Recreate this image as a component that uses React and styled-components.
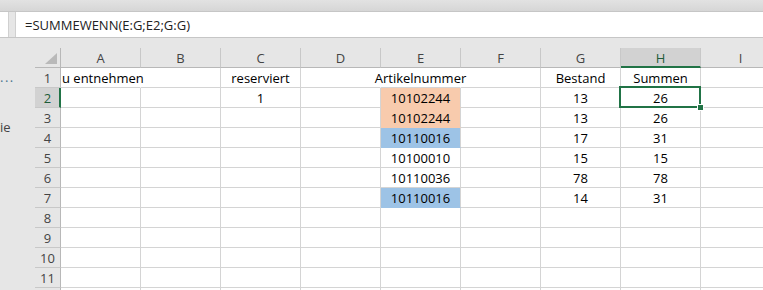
import React from 'react';
import styled, { createGlobalStyle } from 'styled-components';

const GlobalStyle = createGlobalStyle`
  html, body {
    margin: 0;
    padding: 0;
    background: #e6e6e6;
    overflow: hidden;
  }
`;

const CELL_FONT = `"Open Sans", "Noto Sans", sans-serif`;
const UI_FONT = `"Open Sans", "Noto Sans", sans-serif`;
const GREEN = '#217346';
const GRID = '#d4d4d4';

const Page = styled.div`
  width: 763px;
  height: 290px;
  overflow: hidden;
  background: #e6e6e6;
  display: flex;
  flex-direction: column;
`;

const TopStrip = styled.div`
  height: 11px;
  flex: none;
  background: linear-gradient(#e2e2e2, #d6d6d6);
  border-bottom: 1px solid #c6c6c6;
`;

const FormulaRow = styled.div`
  height: 25px;
  flex: none;
  display: flex;
  gap: 6px;
  border-bottom: 1px solid #c6c6c6;
  background: #e6e6e6;
`;

const NameBoxEnd = styled.div`
  width: 8px;
  background: #fff;
  border-right: 1px solid #d0d0d0;
`;

const FormulaBox = styled.div`
  flex: 1;
  background: #fff;
  border-left: 1px solid #d0d0d0;
  display: flex;
  align-items: center;
  padding-left: 9px;
  font-family: ${UI_FONT};
  font-size: 13px;
  color: #222;
`;

const Spacer = styled.div`
  height: 10px;
  flex: none;
`;

const Body = styled.div`
  flex: 1;
  display: flex;
  min-height: 0;
`;

const SidePanel = styled.div`
  width: 35px;
  flex: none;
  display: flex;
  flex-direction: column;
  font-family: ${UI_FONT};
  font-size: 13px;
  color: #444;
  padding-top: 19px;
  overflow: hidden;
  white-space: nowrap;
`;

const SideLine = styled.div`
  height: ${(p) => p.h}px;
  line-height: 20px;
  color: ${(p) => p.color || '#444'};
  letter-spacing: ${(p) => p.spacing || 0}px;
`;

const Sheet = styled.div`
  display: grid;
  grid-template-columns: 26px repeat(9, 80px);
  grid-template-rows: 20px;
  grid-auto-rows: 20px;
  font-family: ${CELL_FONT};
  font-size: 13px;
  color: #000;
  background: #fff;
  align-self: flex-start;
`;

const Corner = styled.div`
  background: #e6e6e6;
  border-right: 1px solid #b8b8b8;
  border-bottom: 1px solid #b8b8b8;
  box-sizing: border-box;
  display: flex;
  align-items: flex-end;
  justify-content: flex-end;
  padding: 0 3px 3px 0;
`;

const ColHead = styled.div`
  box-sizing: border-box;
  background: ${(p) => (p.active ? '#d2d2d2' : '#e6e6e6')};
  border-right: 1px solid #c8c8c8;
  border-bottom: ${(p) => (p.active ? `2px solid ${GREEN}` : '1px solid #b8b8b8')};
  color: ${(p) => (p.active ? '#1d5c38' : '#444')};
  display: flex;
  align-items: center;
  justify-content: center;
  padding-top: ${(p) => (p.active ? 1 : 0)}px;
`;

const RowHead = styled.div`
  box-sizing: border-box;
  background: ${(p) => (p.active ? '#d2d2d2' : '#e6e6e6')};
  border-right: ${(p) => (p.active ? `2px solid ${GREEN}` : '1px solid #b8b8b8')};
  border-bottom: 1px solid #c8c8c8;
  color: ${(p) => (p.active ? '#1d5c38' : '#444')};
  display: flex;
  align-items: center;
  justify-content: center;
  padding-left: ${(p) => (p.active ? 1 : 0)}px;
`;

// cells whose text spills into neighbours are lifted above them
const Cell = styled.div`
  position: ${(p) => (p.selected || p.spill ? 'relative' : 'static')};
  z-index: ${(p) => (p.spill ? 1 : 'auto')};
  box-sizing: border-box;
  background: ${(p) => (p.spill ? 'transparent' : p.fill || '#fff')};
  border-right: 1px solid ${(p) => (p.open ? 'transparent' : GRID)};
  border-bottom: 1px solid ${(p) => p.fill || GRID};
  display: flex;
  align-items: center;
  justify-content: ${(p) => (p.left ? 'flex-start' : 'center')};
  padding-left: ${(p) => (p.left ? 1 : 0)}px;
  white-space: nowrap;
  overflow: visible;
  padding-top: 1px;
`;

const Selection = styled.div`
  position: absolute;
  left: -2px;
  top: -2px;
  right: -1px;
  bottom: -1px;
  border: 2px solid ${GREEN};
  pointer-events: none;
`;

const FillHandle = styled.div`
  position: absolute;
  left: 76px;
  top: 16px;
  width: 5px;
  height: 5px;
  background: ${GREEN};
  border: 1px solid #fff;
`;

const PEACH = '#f8cbad';
const BLUE = '#9dc3e6';

const COLS = ['A', 'B', 'C', 'D', 'E', 'F', 'G', 'H', 'I'];

const DATA = {
  1: { A: 'u entnehmen', C: 'reserviert', E: 'Artikelnummer', G: 'Bestand', H: 'Summen' },
  2: { C: '1', E: '10102244', G: '13', H: '26' },
  3: { E: '10102244', G: '13', H: '26' },
  4: { E: '10110016', G: '17', H: '31' },
  5: { E: '10100010', G: '15', H: '15' },
  6: { E: '10110036', G: '78', H: '78' },
  7: { E: '10110016', G: '14', H: '31' },
};

const FILLS = { 'E2': PEACH, 'E3': PEACH, 'E4': BLUE, 'E7': BLUE };
// borders hidden where row 1 text spills over
const OPEN = { 'A1': true, 'D1': true, 'E1': true };
const SPILL = { 'A1': true, 'E1': true };

export default function App() {
  const rows = [];
  for (let r = 1; r <= 12; r++) rows.push(r);

  return (
    <Page>
      <GlobalStyle />
      <TopStrip />
      <FormulaRow>
        <NameBoxEnd />
        <FormulaBox>=SUMMEWENN(E:G;E2;G:G)</FormulaBox>
      </FormulaRow>
      <Spacer />
      <Body>
        <SidePanel>
          <SideLine h={50} color="#4a7590" spacing={1.5}>...</SideLine>
          <SideLine h={20}>ie</SideLine>
        </SidePanel>
        <Sheet>
          <Corner>
            <svg width="12" height="11" viewBox="0 0 12 11">
              <polygon points="12,0 12,11 0,11" fill="#b9b9b9" />
            </svg>
          </Corner>
          {COLS.map((c) => (
            <ColHead key={c} active={c === 'H'}>{c}</ColHead>
          ))}
          {rows.map((r) => (
            <React.Fragment key={r}>
              {/* row 12 is only a sliver at the bottom edge */}
              <RowHead active={r === 2}>{r < 12 ? r : ''}</RowHead>
              {COLS.map((c) => {
                const id = c + r;
                const value = DATA[r] && DATA[r][c];
                return (
                  <Cell
                    key={id}
                    fill={FILLS[id]}
                    open={OPEN[id]}
                    spill={SPILL[id]}
                    left={id === 'A1'}
                    selected={id === 'H2'}
                  >
                    {value}
                    {id === 'H2' && (
                      <>
                        <Selection />
                        <FillHandle />
                      </>
                    )}
                  </Cell>
                );
              })}
            </React.Fragment>
          ))}
        </Sheet>
      </Body>
    </Page>
  );
}
